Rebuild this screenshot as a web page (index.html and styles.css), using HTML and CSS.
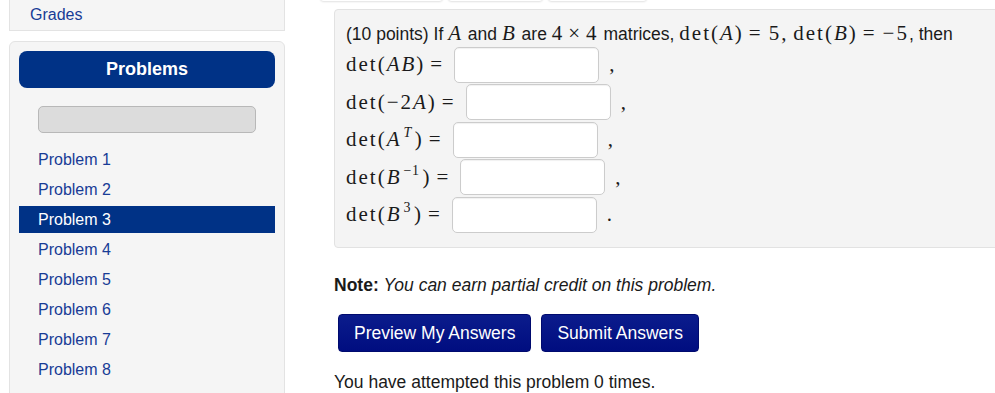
FILE: index.html
```html
<!DOCTYPE html>
<html lang="en">
<head>
<meta charset="utf-8">
<title>Problem 3</title>
<link rel="stylesheet" href="styles.css">
</head>
<body>
<div class="page">
  <aside class="sidebar">
    <div class="grades-box"><a class="link" href="#">Grades</a></div>
    <div class="nav-box">
      <div class="nav-header">Problems</div>
      <div class="nav-select"></div>
      <ul class="nav-list">
        <li><a class="link" href="#">Problem 1</a></li>
        <li><a class="link" href="#">Problem 2</a></li>
        <li><a class="link active" href="#">Problem 3</a></li>
        <li><a class="link" href="#">Problem 4</a></li>
        <li><a class="link" href="#">Problem 5</a></li>
        <li><a class="link" href="#">Problem 6</a></li>
        <li><a class="link" href="#">Problem 7</a></li>
        <li><a class="link" href="#">Problem 8</a></li>
      </ul>
    </div>
  </aside>
  <main class="main">
    <div class="stubs">
      <span class="stub s1"></span><span class="stub s2"></span><span class="stub s3"></span>
    </div>
    <div class="problem">
      <div class="intro">(10 points) If <span class="m"><i>A</i></span> and <span class="m"><i>B</i></span> are <span class="m">4<span class="op">×</span>4</span> matrices, <span class="m">det(<i>A</i>)<span class="rel">=</span>5,</span> <span class="m">det(<i>B</i>)<span class="rel">=</span>−5</span>, then</div>
      <div class="row"><span class="m">det(<i>AB</i>)<span class="rel">=</span></span><span class="answer"></span><span class="m punct">,</span></div>
      <div class="row"><span class="m">det(−2<i>A</i>)<span class="rel">=</span></span><span class="answer"></span><span class="m punct">,</span></div>
      <div class="row"><span class="m">det(<i>A</i><sup><i>T</i></sup>)<span class="rel">=</span></span><span class="answer"></span><span class="m punct">,</span></div>
      <div class="row"><span class="m">det(<i>B</i><sup>−1</sup>)<span class="rel">=</span></span><span class="answer"></span><span class="m punct">,</span></div>
      <div class="row"><span class="m">det(<i>B</i><sup>3</sup>)<span class="rel">=</span></span><span class="answer"></span><span class="m punct">.</span></div>
    </div>
    <p class="note"><b>Note:</b> <i>You can earn partial credit on this problem.</i></p>
    <div class="buttons">
      <button class="btn">Preview My Answers</button>
      <button class="btn">Submit Answers</button>
    </div>
    <p class="attempts">You have attempted this problem 0 times.</p>
  </main>
</div>
</body>
</html>
```
FILE: styles.css
```css
html, body {
  margin: 0;
  padding: 0;
  background: #ffffff;
  overflow: hidden;
}
body {
  font-family: "Liberation Sans", Arial, sans-serif;
  font-size: 16px;
  color: #1a1a1a;
}
.page {
  display: flex;
  align-items: flex-start;
  padding-left: 9px;
  height: 393px;
}
.sidebar {
  width: 276px;
  flex: none;
}
.link {
  color: #183c96;
  text-decoration: none;
}
.grades-box {
  height: 32px;
  margin-top: -1px;
  box-sizing: border-box;
  background: #f5f5f5;
  border: 1px solid #e3e3e3;
  padding: 5px 0 0 20px;
  line-height: 20px;
}
.nav-box {
  margin-top: 10px;
  background: #f5f5f5;
  border: 1px solid #e3e3e3;
  border-radius: 6px;
  padding: 9px 9px 20px;
  height: 400px;
}
.nav-header {
  height: 37px;
  background: #003286;
  border-radius: 8px;
  color: #ffffff;
  font-weight: bold;
  font-size: 18px;
  line-height: 37px;
  text-align: center;
}
.nav-select {
  margin: 18px 19px 0;
  height: 27px;
  box-sizing: border-box;
  background: #dcdcdc;
  border: 1px solid #b8b8b8;
  border-radius: 5px;
}
.nav-list {
  list-style: none;
  margin: 13px 0 0;
  padding: 0;
  display: flex;
  flex-direction: column;
  gap: 3px;
}
.nav-list .link {
  display: block;
  height: 27px;
  line-height: 27px;
  padding-left: 19px;
}
.nav-list .link.active {
  background: #003286;
  color: #ffffff;
}
.main {
  margin-left: 49px;
  flex: 1;
  min-width: 0;
  font-size: 17.5px;
}
.stubs {
  display: flex;
  gap: 5px;
  height: 2px;
  margin-left: -14px;
  overflow: visible;
}
.stub {
  display: block;
  height: 30px;
  margin-top: -29px;
  background: #ffffff;
  border-radius: 4px;
  box-shadow: 0 1px 2px rgba(0, 0, 0, 0.12);
}
.s1 { width: 123px; }
.s2 { width: 95px; }
.s3 { width: 99px; }
.problem {
  margin-top: 7px;
  margin-right: -20px;
  background: #f4f4f4;
  border: 1px solid #e2e2e2;
  border-radius: 4px;
  padding: 11px 11px 12px;
  height: 214px;
}
.intro {
  line-height: 24px;
  height: 24px;
  white-space: nowrap;
  margin-bottom: 1px;
}
.m {
  font-family: "Liberation Serif", "Times New Roman", serif;
  font-size: 21px;
  letter-spacing: 2px;
}
.m i {
  font-style: italic;
}
.m sup {
  font-size: 14px;
  line-height: 0;
  vertical-align: 0;
  position: relative;
  top: -9px;
  letter-spacing: 0.5px;
  padding: 0 3px 0 2px;
}
.op {
  margin: 0 4px;
}
.rel {
  margin: 0 6px 0 5px;
}
.row {
  display: flex;
  align-items: center;
  height: 37.5px;
  white-space: nowrap;
}
.answer {
  display: block;
  height: 36px;
  width: 145px;
  box-sizing: border-box;
  background: #ffffff;
  border: 1px solid #cccccc;
  border-radius: 5px;
  box-shadow: inset 0 1px 1px rgba(0, 0, 0, 0.06);
  margin-left: 4px;
}
.punct {
  margin-left: 10px;
}
.note {
  margin: 27px 0 0;
  line-height: 20px;
}
.buttons {
  display: flex;
  gap: 10px;
  margin: 19px 0 0 4px;
}
.btn {
  height: 38px;
  padding: 0 15px;
  border: 1px solid #000a6e;
  border-radius: 4px;
  background: linear-gradient(#0b1c8c, #000d80);
  color: #ffffff;
  font-family: "Liberation Sans", Arial, sans-serif;
  font-size: 17.5px;
}
.attempts {
  margin: 20px 0 0;
  line-height: 20px;
}
```
